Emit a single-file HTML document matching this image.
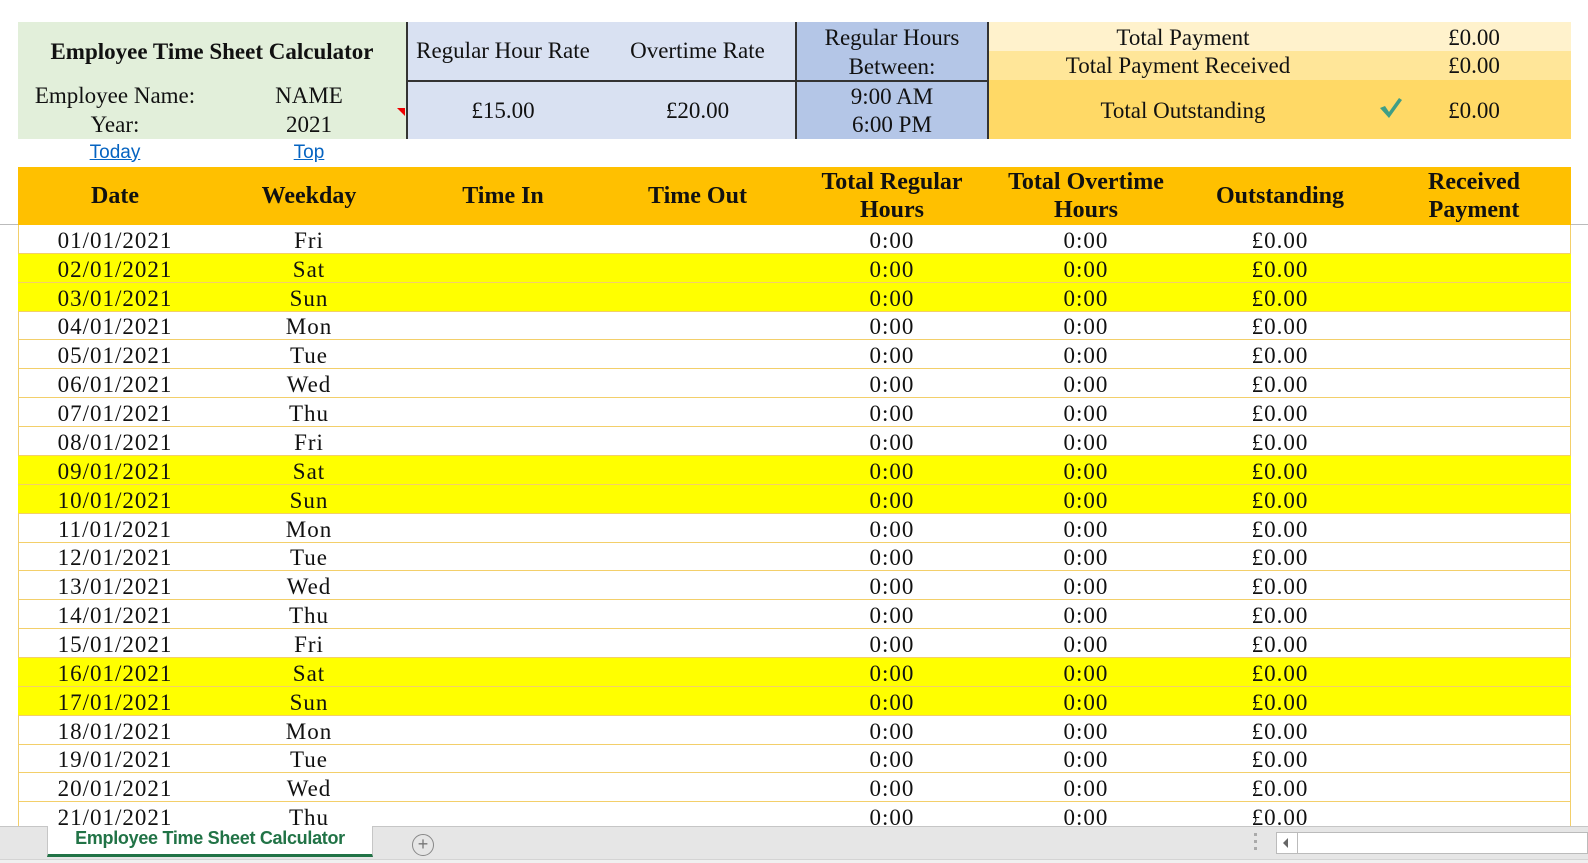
<!DOCTYPE html>
<html><head><meta charset="utf-8"><style>
*{margin:0;padding:0;box-sizing:border-box}
body{width:1588px;height:863px;overflow:hidden;background:#fff;font-family:"Liberation Serif",serif;color:#111;position:relative}
.a{position:absolute;display:flex;align-items:center;justify-content:center;text-align:center;line-height:1.3}
.hdr{font-weight:bold;font-size:24px;line-height:28px}
.row{position:absolute;left:18px;width:1553px;height:29px;border-bottom:1px solid #f3cf6a;font-size:23px;letter-spacing:1px}
.row div{position:absolute;top:0;height:28px;line-height:32px;text-align:center;width:194px}
.y{background:#ffff00}
.t{font-size:23px}
</style></head><body>
<div class="a" style="left:18px;top:22px;width:388px;height:117px;background:#e2efda"></div>
<div class="a" style="left:18px;top:22px;width:388px;height:59px;font-weight:bold;font-size:23px">Employee Time Sheet Calculator</div>
<div class="a t" style="left:18px;top:82px;width:194px;height:28px">Employee Name:</div>
<div class="a t" style="left:18px;top:111px;width:194px;height:28px">Year:</div>
<div class="a t" style="left:212px;top:82px;width:194px;height:28px">NAME</div>
<div class="a t" style="left:212px;top:111px;width:194px;height:28px">2021</div>
<div style="position:absolute;left:397px;top:108px;width:0;height:0;border-left:8px solid transparent;border-top:8px solid #e00"></div>

<div style="position:absolute;left:406px;top:22px;width:389px;height:117px;background:#d9e1f2;border-left:2px solid #333"></div>
<div style="position:absolute;left:406px;top:80px;width:583px;height:2px;background:#333"></div>
<div class="a t" style="left:406px;top:22px;width:194px;height:58px">Regular Hour Rate</div>
<div class="a t" style="left:600px;top:22px;width:195px;height:58px">Overtime Rate</div>
<div class="a t" style="left:406px;top:82px;width:194px;height:57px">£15.00</div>
<div class="a t" style="left:600px;top:82px;width:195px;height:57px">£20.00</div>

<div style="position:absolute;left:795px;top:22px;width:194px;height:117px;background:#b4c6e7;border-left:2px solid #333;border-right:2px solid #333"></div>
<div style="position:absolute;left:795px;top:80px;width:194px;height:2px;background:#333"></div>
<div class="a t" style="left:795px;top:24px;width:194px;height:28px">Regular Hours</div>
<div class="a t" style="left:795px;top:53px;width:194px;height:28px">Between:</div>
<div class="a t" style="left:795px;top:83px;width:194px;height:28px">9:00 AM</div>
<div class="a t" style="left:795px;top:111px;width:194px;height:28px">6:00 PM</div>

<div style="position:absolute;left:989px;top:22px;width:582px;height:29px;background:#fff2cc"></div>
<div style="position:absolute;left:989px;top:51px;width:582px;height:29px;background:#ffe699"></div>
<div style="position:absolute;left:989px;top:80px;width:582px;height:59px;background:#ffd966"></div>
<div class="a t" style="left:989px;top:24px;width:388px;height:28px">Total Payment</div>
<div class="a t" style="left:989px;top:52px;width:378px;height:28px">Total Payment Received</div>
<div class="a t" style="left:989px;top:82px;width:388px;height:57px">Total Outstanding</div>
<div class="a t" style="left:1377px;top:24px;width:194px;height:28px">£0.00</div>
<div class="a t" style="left:1377px;top:52px;width:194px;height:28px">£0.00</div>
<div class="a t" style="left:1377px;top:82px;width:194px;height:57px">£0.00</div>
<svg style="position:absolute;left:1379px;top:97px" width="24" height="22" viewBox="0 0 24 22"><path d="M1 11 L6 9 L10 15 L20 1 L23 3 L10 21 Z" fill="#3f9e86"/></svg>

<div class="a" style="left:18px;top:141px;width:194px;height:24px;font-size:19px;color:#0563c1;text-decoration:underline;font-family:'Liberation Sans',sans-serif">Today</div>
<div class="a" style="left:212px;top:141px;width:194px;height:24px;font-size:19px;color:#0563c1;text-decoration:underline;font-family:'Liberation Sans',sans-serif">Top</div>

<div style="position:absolute;left:0;top:224px;width:1588px;height:1px;background:#bbb"></div>
<div style="position:absolute;left:18px;top:167px;width:1553px;height:58px;background:#ffc000"></div>
<div class="a hdr" style="left:18px;top:167px;width:194px;height:58px">Date</div>
<div class="a hdr" style="left:212px;top:167px;width:194px;height:58px">Weekday</div>
<div class="a hdr" style="left:406px;top:167px;width:194px;height:58px">Time In</div>
<div class="a hdr" style="left:600px;top:167px;width:195px;height:58px">Time Out</div>
<div class="a hdr" style="left:795px;top:167px;width:194px;height:58px">Total Regular<br>Hours</div>
<div class="a hdr" style="left:989px;top:167px;width:194px;height:58px">Total Overtime<br>Hours</div>
<div class="a hdr" style="left:1183px;top:167px;width:194px;height:58px">Outstanding</div>
<div class="a hdr" style="left:1377px;top:167px;width:194px;height:58px">Received<br>Payment</div>

<div style="position:absolute;left:18px;top:225px;width:1px;height:602px;background:#f3cf6a"></div>
<div style="position:absolute;left:1570px;top:225px;width:1px;height:602px;background:#f3cf6a"></div>

<div class="row" style="top:225px"><div style="left:0">01/01/2021</div><div style="left:194px">Fri</div><div style="left:777px">0:00</div><div style="left:971px">0:00</div><div style="left:1165px">£0.00</div></div>
<div class="row y" style="top:254px"><div style="left:0">02/01/2021</div><div style="left:194px">Sat</div><div style="left:777px">0:00</div><div style="left:971px">0:00</div><div style="left:1165px">£0.00</div></div>
<div class="row y" style="top:283px"><div style="left:0">03/01/2021</div><div style="left:194px">Sun</div><div style="left:777px">0:00</div><div style="left:971px">0:00</div><div style="left:1165px">£0.00</div></div>
<div class="row" style="top:311px"><div style="left:0">04/01/2021</div><div style="left:194px">Mon</div><div style="left:777px">0:00</div><div style="left:971px">0:00</div><div style="left:1165px">£0.00</div></div>
<div class="row" style="top:340px"><div style="left:0">05/01/2021</div><div style="left:194px">Tue</div><div style="left:777px">0:00</div><div style="left:971px">0:00</div><div style="left:1165px">£0.00</div></div>
<div class="row" style="top:369px"><div style="left:0">06/01/2021</div><div style="left:194px">Wed</div><div style="left:777px">0:00</div><div style="left:971px">0:00</div><div style="left:1165px">£0.00</div></div>
<div class="row" style="top:398px"><div style="left:0">07/01/2021</div><div style="left:194px">Thu</div><div style="left:777px">0:00</div><div style="left:971px">0:00</div><div style="left:1165px">£0.00</div></div>
<div class="row" style="top:427px"><div style="left:0">08/01/2021</div><div style="left:194px">Fri</div><div style="left:777px">0:00</div><div style="left:971px">0:00</div><div style="left:1165px">£0.00</div></div>
<div class="row y" style="top:456px"><div style="left:0">09/01/2021</div><div style="left:194px">Sat</div><div style="left:777px">0:00</div><div style="left:971px">0:00</div><div style="left:1165px">£0.00</div></div>
<div class="row y" style="top:485px"><div style="left:0">10/01/2021</div><div style="left:194px">Sun</div><div style="left:777px">0:00</div><div style="left:971px">0:00</div><div style="left:1165px">£0.00</div></div>
<div class="row" style="top:514px"><div style="left:0">11/01/2021</div><div style="left:194px">Mon</div><div style="left:777px">0:00</div><div style="left:971px">0:00</div><div style="left:1165px">£0.00</div></div>
<div class="row" style="top:542px"><div style="left:0">12/01/2021</div><div style="left:194px">Tue</div><div style="left:777px">0:00</div><div style="left:971px">0:00</div><div style="left:1165px">£0.00</div></div>
<div class="row" style="top:571px"><div style="left:0">13/01/2021</div><div style="left:194px">Wed</div><div style="left:777px">0:00</div><div style="left:971px">0:00</div><div style="left:1165px">£0.00</div></div>
<div class="row" style="top:600px"><div style="left:0">14/01/2021</div><div style="left:194px">Thu</div><div style="left:777px">0:00</div><div style="left:971px">0:00</div><div style="left:1165px">£0.00</div></div>
<div class="row" style="top:629px"><div style="left:0">15/01/2021</div><div style="left:194px">Fri</div><div style="left:777px">0:00</div><div style="left:971px">0:00</div><div style="left:1165px">£0.00</div></div>
<div class="row y" style="top:658px"><div style="left:0">16/01/2021</div><div style="left:194px">Sat</div><div style="left:777px">0:00</div><div style="left:971px">0:00</div><div style="left:1165px">£0.00</div></div>
<div class="row y" style="top:687px"><div style="left:0">17/01/2021</div><div style="left:194px">Sun</div><div style="left:777px">0:00</div><div style="left:971px">0:00</div><div style="left:1165px">£0.00</div></div>
<div class="row" style="top:716px"><div style="left:0">18/01/2021</div><div style="left:194px">Mon</div><div style="left:777px">0:00</div><div style="left:971px">0:00</div><div style="left:1165px">£0.00</div></div>
<div class="row" style="top:744px"><div style="left:0">19/01/2021</div><div style="left:194px">Tue</div><div style="left:777px">0:00</div><div style="left:971px">0:00</div><div style="left:1165px">£0.00</div></div>
<div class="row" style="top:773px"><div style="left:0">20/01/2021</div><div style="left:194px">Wed</div><div style="left:777px">0:00</div><div style="left:971px">0:00</div><div style="left:1165px">£0.00</div></div>
<div class="row" style="top:802px"><div style="left:0">21/01/2021</div><div style="left:194px">Thu</div><div style="left:777px">0:00</div><div style="left:971px">0:00</div><div style="left:1165px">£0.00</div></div>

<div style="position:absolute;left:0;top:826px;width:1588px;height:37px;background:#e6e6e6;border-top:1px solid #c6c6c6"></div>
<div style="position:absolute;left:0;top:859px;width:1588px;height:4px;background:#f0f0f0;border-top:1px solid #d4d4d4"></div>
<div style="position:absolute;left:47px;top:826px;width:326px;height:31px;background:#fff;border-left:1px solid #c6c6c6;border-right:1px solid #c6c6c6;border-bottom:3px solid #217346;color:#217346;font-family:'Liberation Sans',sans-serif;font-weight:bold;font-size:18px;text-align:center;line-height:24px;letter-spacing:-0.3px">Employee Time Sheet Calculator</div>
<div style="position:absolute;left:412px;top:834px;width:22px;height:22px;border:1.5px solid #888;border-radius:50%;color:#777;font-family:'Liberation Sans',sans-serif;font-size:18px;line-height:18px;text-align:center">+</div>
<div style="position:absolute;left:1254px;top:833px;width:3px;height:3px;background:#aaa;box-shadow:0 7px 0 #aaa,0 14px 0 #aaa"></div>
<div style="position:absolute;left:1276px;top:832px;width:312px;height:22px;background:#fff;border:1px solid #bbb"></div>
<div style="position:absolute;left:1297px;top:832px;width:1px;height:22px;background:#bbb"></div>
<div style="position:absolute;left:1283px;top:838px;width:0;height:0;border-top:5px solid transparent;border-bottom:5px solid transparent;border-right:5px solid #666"></div>
</body></html>
